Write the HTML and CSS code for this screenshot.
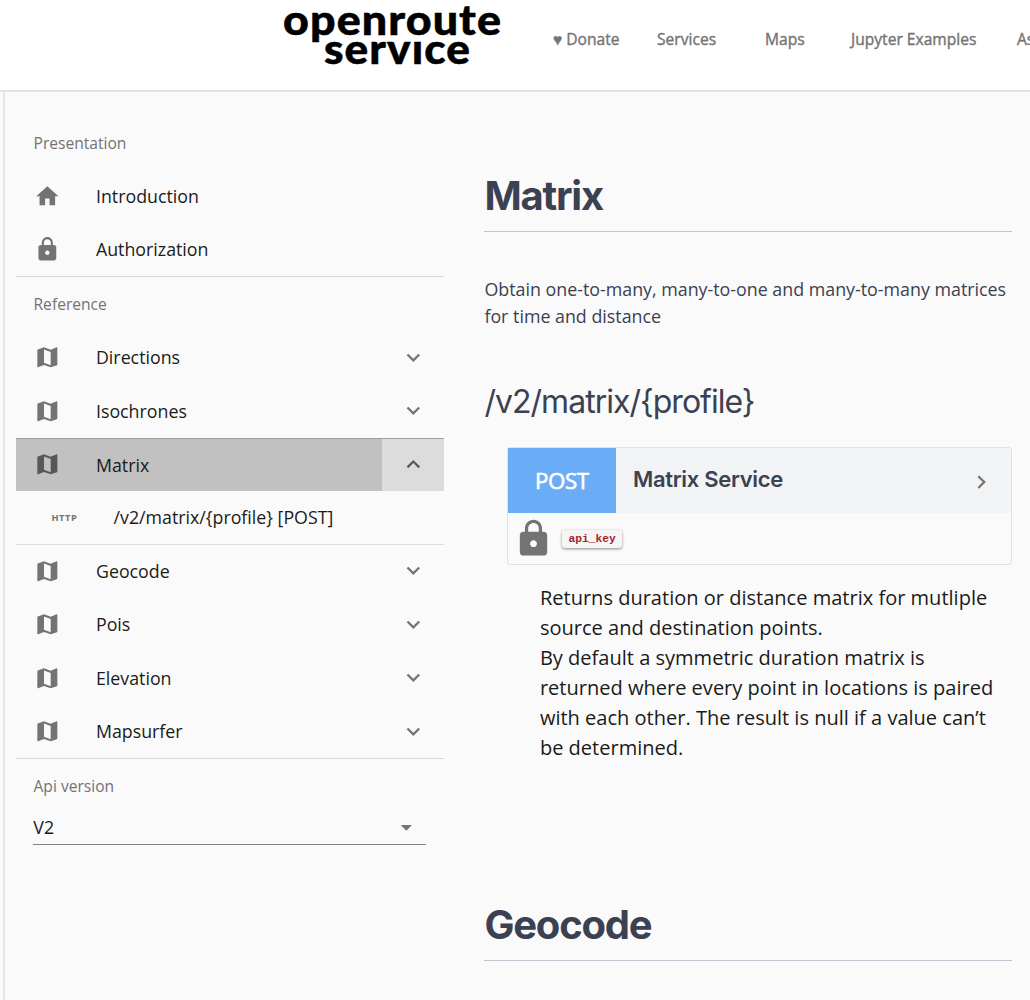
FILE: index.html
```
<!DOCTYPE html>
<html lang="en">
<head>
    <meta charset="UTF-8">
    <meta name="viewport" content="width=device-width, initial-scale=1.0">
    <title>openrouteservice - API reference</title>
    <link rel="stylesheet" href="styles.css">
</head>
<body>
    <!-- shared icons -->
    <svg class="sprite">
        <symbol id="home" viewBox="0 0 24 24"><path d="M10 20v-6h4v6h5v-8h3L12 3 2 12h3v8z"/></symbol>
        <symbol id="lock" viewBox="0 0 24 24"><path d="M18 8h-1V6c0-2.76-2.24-5-5-5S7 3.24 7 6v2H6c-1.1 0-2 .9-2 2v10c0 1.1.9 2 2 2h12c1.1 0 2-.9 2-2V10c0-1.1-.9-2-2-2zm-6 9c-1.1 0-2-.9-2-2s.9-2 2-2 2 .9 2 2-.9 2-2 2zm3.1-9H8.900V6c0-1.710 1.390-3.100 3.100-3.100s3.100 1.390 3.100 3.100v2z"/></symbol>
        <symbol id="map" viewBox="0 0 24 24"><path d="M20.500 3l-.16.030L15 5.100 9 3 3.360 4.900c-.21.070-.36.250-.36.480V20.500c0 .28.220.5.500.5l.16-.03L9 18.900l6 2.100 5.640-1.900c.21-.07.360-.25.360-.48V3.500c0-.28-.22-.5-.5-.5zM15 19l-6-2.110V5l6 2.110V19z"/></symbol>
        <symbol id="down" viewBox="0 0 24 24"><path d="M7.410 7.840L12 12.420l4.590-4.580L18 9.250l-6 6-6-6z"/></symbol>
        <symbol id="up" viewBox="0 0 24 24"><path d="M7.410 15.410L12 10.830l4.590 4.580L18 14l-6-6-6 6z"/></symbol>
        <symbol id="right" viewBox="0 0 24 24"><path d="M8.590 16.340l4.580-4.590-4.580-4.590L10 5.750l6 6-6 6z"/></symbol>
        <symbol id="caret" viewBox="0 0 24 24"><path d="M7 10l5 5 5-5z"/></symbol>
    </svg>

    <header class="header">
        <a class="logo" href="#">
            <svg width="224" height="76" viewBox="0 0 224 76">
                <text x="2" y="35" textLength="219" lengthAdjust="spacingAndGlyphs">openroute</text>
                <text x="43" y="64" textLength="147" lengthAdjust="spacingAndGlyphs">servıce</text>
            </svg>
        </a>
        <nav class="top-nav">
            <a class="donate" href="#">♥ Donate</a>
            <a class="services" href="#">Services</a>
            <a class="maps" href="#">Maps</a>
            <a class="jupyter" href="#">Jupyter Examples</a>
            <a href="#">Ask Us</a>
        </nav>
    </header>

    <div class="layout">
        <aside class="sidebar">
            <div class="group">
                <div class="subheader">Presentation</div>
                <a class="item" href="#"><svg class="icon"><use href="#home"/></svg><span>Introduction</span></a>
                <a class="item" href="#"><svg class="icon"><use href="#lock"/></svg><span>Authorization</span></a>
            </div>

            <div class="group">
                <div class="subheader">Reference</div>
                <a class="item" href="#"><svg class="icon"><use href="#map"/></svg><span>Directions</span><i class="toggle"><svg class="icon"><use href="#down"/></svg></i></a>
                <a class="item" href="#"><svg class="icon"><use href="#map"/></svg><span>Isochrones</span><i class="toggle"><svg class="icon"><use href="#down"/></svg></i></a>
                <a class="item active" href="#"><svg class="icon"><use href="#map"/></svg><span>Matrix</span><i class="toggle"><svg class="icon"><use href="#up"/></svg></i></a>
                <a class="item sub" href="#"><b class="http">HTTP</b><span>/v2/matrix/{profile} [POST]</span></a>
                <a class="item" href="#"><svg class="icon"><use href="#map"/></svg><span>Geocode</span><i class="toggle"><svg class="icon"><use href="#down"/></svg></i></a>
                <a class="item" href="#"><svg class="icon"><use href="#map"/></svg><span>Pois</span><i class="toggle"><svg class="icon"><use href="#down"/></svg></i></a>
                <a class="item" href="#"><svg class="icon"><use href="#map"/></svg><span>Elevation</span><i class="toggle"><svg class="icon"><use href="#down"/></svg></i></a>
                <a class="item" href="#"><svg class="icon"><use href="#map"/></svg><span>Mapsurfer</span><i class="toggle"><svg class="icon"><use href="#down"/></svg></i></a>
            </div>

            <div class="subheader">Api version</div>
            <div class="select">
                <span>V2</span>
                <svg class="icon"><use href="#caret"/></svg>
            </div>
        </aside>

        <main class="content">
            <section class="tag">
                <h1>Matrix</h1>
                <p class="summary">Obtain one-to-many, many-to-one and many-to-many matrices<br>for time and distance</p>
                <h2>/v2/matrix/{profile}</h2>

                <div class="endpoint">
                    <div class="endpoint-head">
                        <span class="method">POST</span>
                        <h3>Matrix Service</h3>
                        <svg class="icon"><use href="#right"/></svg>
                    </div>
                    <div class="endpoint-auth">
                        <svg class="icon-lock"><use href="#lock"/></svg>
                        <code>api_key</code>
                    </div>
                </div>
                <p class="description">Returns duration or distance matrix for mutliple<br>source and destination points.<br>By default a symmetric duration matrix is<br>returned where every point in locations is paired<br>with each other. The result is null if a value can’t<br>be determined.</p>
            </section>

            <section class="tag">
                <h1>Geocode</h1>
            </section>
        </main>
    </div>
</body>
</html>
```
FILE: styles.css
```
* {
    margin: 0;
    padding: 0;
    box-sizing: border-box;
}

body {
    height: 1000px;
    overflow: hidden;
    background: #fafafa;
    color: #1a1a1a;
    font-family: "Open Sans", "Noto Sans", sans-serif;
}

a {
    color: inherit;
    text-decoration: none;
}

.sprite {
    display: none;
}

.icon {
    width: 26.7px;
    height: 26.7px;
    fill: #737373;
    flex-shrink: 0;
}

/* header */
.header {
    display: flex;
    height: 92px;
    padding-left: 281px;
    background: #fff;
    border-bottom: 2px solid #e2e2e2;
}

.logo {
    width: 272px;
    flex-shrink: 0;
}

.logo svg {
    overflow: visible;
}

.logo text {
    font-family: Lato, sans-serif;
    font-size: 41px;
    font-weight: 900;
    letter-spacing: 1px;
    stroke: #000;
    stroke-width: 0.5px;
}

.top-nav {
    display: flex;
    padding-top: 28px;
    font-size: 15.6px;
    line-height: 22px;
    color: #757575;
    white-space: nowrap;
    -webkit-text-stroke: 0.4px #757575;
}

.donate {
    width: 104px;
}

.services {
    width: 108px;
}

.maps {
    width: 86px;
}

.jupyter {
    width: 166px;
}

.layout {
    display: flex;
    height: 908px;
    margin-left: 3px;
    border-left: 2px solid #e6e6e6;
}

/* sidebar */
.sidebar {
    width: 439px;
    padding: 24px 0 0 11px;
    flex-shrink: 0;
}

.group {
    border-bottom: 1px solid #d9d9d9;
}

.subheader {
    height: 53.45px;
    padding-left: 17.5px;
    line-height: 55px;
    font-size: 15.6px;
    color: #737373;
}

.item {
    display: flex;
    align-items: center;
    height: 53.45px;
    padding-left: 17.6px;
    font-size: 17.8px;
}

.item span {
    flex: 1;
    margin: -0.4px 0 0 35.7px;
}

.toggle {
    display: flex;
    align-items: center;
    justify-content: center;
    width: 62px;
    height: 100%;
    padding-top: 1px;
}

.active {
    background: #c1c1c1;
    border-top: 1px solid #a0a0a0;
}

.active > .icon {
    margin-top: -1px;
}

.active .toggle {
    padding: 0 0 1px;
    background: #dcdcdc;
}

.active .icon {
    fill: #585858;
}

.sub {
    padding-left: 35.5px;
    border-bottom: 1px solid #dedede;
}

.sub span {
    margin-left: 35px;
}

.http {
    width: 27px;
    font-size: 9.3px;
    letter-spacing: 0.5px;
    color: #737373;
}

.select {
    display: flex;
    align-items: center;
    justify-content: space-between;
    width: 393px;
    height: 32px;
    margin-left: 17.3px;
    padding: 0 7px 2px 0;
    border-bottom: 1px solid #858585;
    font-size: 17.8px;
}

/* content */
.content {
    width: 528px;
    margin-left: 40.4px;
    color: #3b4151;
}

h1,
h2,
h3 {
    font-family: Inter, sans-serif;
}

h1 {
    height: 140px;
    padding-top: 80px;
    border-bottom: 1px solid #c3c6d2;
    font-size: 40px;
    font-weight: 700;
    line-height: 48px;
    letter-spacing: -1.2px;
}

.summary {
    margin-top: 44px;
    font-size: 17.84px;
    line-height: 26.7px;
    white-space: nowrap;
}

h2 {
    margin-top: 52px;
    font-size: 32px;
    font-weight: 400;
    line-height: 42px;
    letter-spacing: -0.97px;
}

.endpoint {
    width: 505px;
    margin: 23.6px 0 0 22.5px;
    border: 1px solid #dfe1e5;
    border-radius: 3px;
}

.endpoint-head {
    display: flex;
    align-items: center;
    height: 65.4px;
    padding-right: 16px;
    background: #f2f3f5;
}

.endpoint-head .icon {
    margin-top: 4px;
}

.method {
    width: 108px;
    background: #6bacf7;
    color: #fff;
    font-size: 22.3px;
    line-height: 65.4px;
    text-align: center;
    letter-spacing: -0.4px;
    -webkit-text-stroke: 0.6px #fff;
}

h3 {
    flex: 1;
    margin: 0 0 3px 17px;
    font-size: 22px;
    font-weight: 600;
    letter-spacing: -0.3px;
}

.endpoint-auth {
    display: flex;
    align-items: center;
    height: 51px;
    padding-left: 5px;
}

.icon-lock {
    width: 41px;
    height: 41px;
    fill: #737373;
}

code {
    margin-left: 8.5px;
    padding: 0 6px;
    border-radius: 3px;
    background: #f5f5f5;
    box-shadow: 0 1px 3px rgba(0, 0, 0, 0.45);
    color: #a3262f;
    font: bold 11.3px/18px "Courier New", "Liberation Mono", monospace;
}

.description {
    margin: 17.5px 0 0 55.5px;
    font-size: 20.04px;
    line-height: 30px;
    color: #1a1a1a;
    white-space: nowrap;
}

.tag + .tag {
    margin-top: 58.5px;
}
```
